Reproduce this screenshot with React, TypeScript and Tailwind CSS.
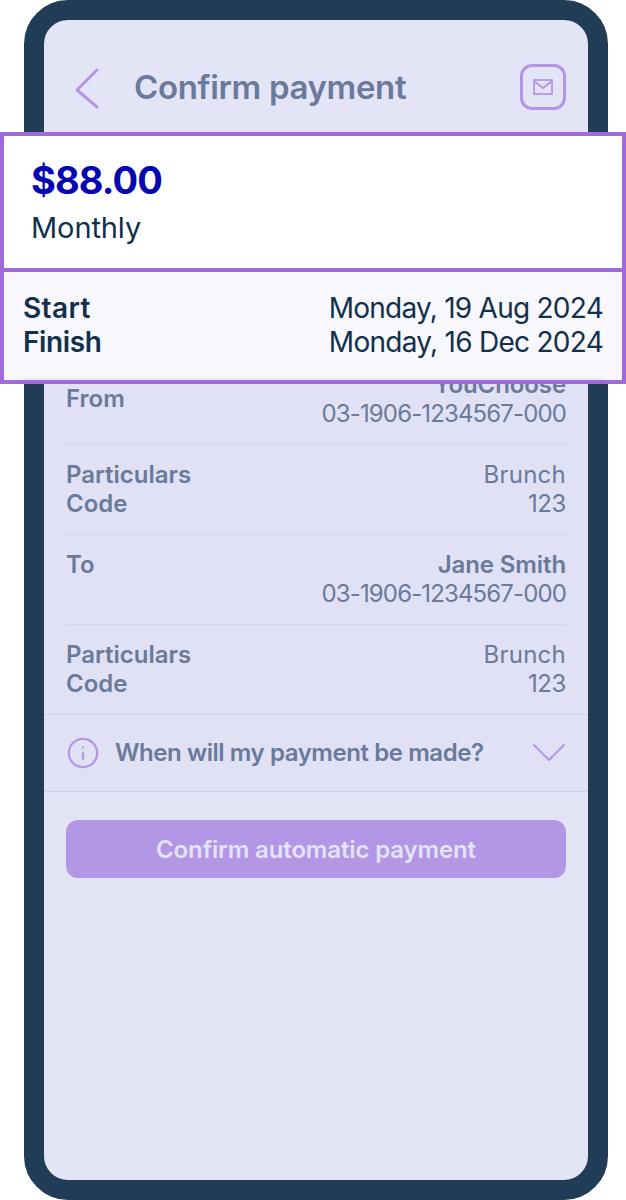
import { Info } from "lucide-react";

const font = { fontFamily: '"Inter", "Noto Sans", sans-serif' };

interface RowProps {
    label: string;
    label2?: string;
    value: string;
    value2: string;
    account?: boolean;
    from?: boolean;
}

function DetailRow({ label, label2, value, value2, account, from }: RowProps) {
    return (
        <div className="flex h-[90px] justify-between border-b border-[#d5d6ea] py-[15px] text-[24px] leading-[29px] text-[#6a7a9b]">
            <div className={from ? "mt-[14px] font-semibold" : "font-semibold"}>
                <div>{label}</div>
                {label2 && <div>{label2}</div>}
            </div>
            <div className="text-right">
                <div className={account ? "font-semibold tracking-[-0.1px]" : "tracking-[0.25px]"}>{value}</div>
                <div className={account ? "tracking-[-0.87px]" : "tracking-[-0.4px]"}>{value2}</div>
            </div>
        </div>
    );
}

export default function App() {
    return (
        <div className="relative h-[1200px] w-[626px] bg-white" style={font}>
            <div className="ml-[24px] h-[1200px] w-[584px] overflow-hidden rounded-[44px] border-[20px] border-[#213c56] bg-[#e3e4f6]">
                <div className="flex h-[135px] items-start px-[22px] pt-[44px]">
                    <svg className="ml-[8px] mt-[3px] h-[42px] w-[26px] shrink-0" viewBox="0 0 26 42" fill="none">
                        <polyline points="23,3 3,23 23,40" stroke="#b495e6" strokeWidth="3" strokeLinecap="round" strokeLinejoin="round" />
                    </svg>
                    <h1 className="ml-[34px] text-[33px] font-semibold leading-[46px] tracking-[-0.35px] text-[#6a7a9b]">Confirm payment</h1>
                    <div className="ml-auto flex h-[46px] w-[46px] shrink-0 items-center justify-center rounded-[12px] border-[3px] border-[#b495e6]">
                        <svg className="h-[16px] w-[20px]" viewBox="0 0 20 16" fill="none">
                            <rect x="1" y="1" width="18" height="14" stroke="#b495e6" strokeWidth="1.8" />
                            <polyline points="1,2 10,9 19,2" stroke="#b495e6" strokeWidth="1.8" />
                        </svg>
                    </div>
                </div>
                <div className="h-[200px]" />
                <div className="bg-[#e0e1f5] px-[22px]">
                    <DetailRow label="From" value="YouChoose" value2="03-1906-1234567-000" account from />
                    <DetailRow label="Particulars" label2="Code" value="Brunch" value2="123" />
                    <DetailRow label="To" value="Jane Smith" value2="03-1906-1234567-000" account />
                    <div className="flex h-[89px] justify-between py-[15px] text-[24px] leading-[29px] text-[#6a7a9b]">
                        <div className="font-semibold">
                            <div>Particulars</div>
                            <div>Code</div>
                        </div>
                        <div className="text-right">
                            <div className="tracking-[0.25px]">Brunch</div>
                            <div className="tracking-[-0.4px]">123</div>
                        </div>
                    </div>
                </div>
                <div className="flex h-[78px] items-center border-y border-[#d0d1e8] bg-[#e0e1f5] px-[22px]">
                    <Info className="h-[34px] w-[34px] shrink-0 text-[#b495e6]" strokeWidth={1.6} />
                    <span className="ml-[15px] text-[24px] font-semibold tracking-[-0.43px] text-[#6a7a9b]">When will my payment be made?</span>
                    <svg className="ml-auto mr-[1px] h-[20px] w-[32px] shrink-0" viewBox="0 0 32 20" fill="none">
                        <polyline points="1,2 16,17 31,2" stroke="#b495e6" strokeWidth="2" strokeLinecap="round" strokeLinejoin="round" />
                    </svg>
                </div>
                <div className="px-[22px] pt-[28px]">
                    <button className="flex h-[58px] w-full items-center justify-center rounded-[12px] bg-[#b496e6] pt-[2px] text-[24px] font-semibold tracking-[-0.14px] text-[#e2e3f6]">
                        Confirm automatic payment
                    </button>
                </div>
            </div>

            <div className="absolute left-0 right-0 top-[132px] h-[252px] bg-white">
                <div className="h-[140px] border-4 border-[#a06ada] bg-white px-[28px] pt-[20px]">
                    <div className="ml-[-1px] text-[38px] font-bold leading-[48px] tracking-[-0.9px] text-[#0606b3]">$88.00</div>
                    <div className="ml-[-1px] mt-[4px] text-[29px] leading-[40px] tracking-[-0.1px] text-[#12304c]">Monthly</div>
                </div>
                <div className="mt-[-4px] h-[116px] border-4 border-[#a06ada] bg-[#f7f7fc] px-[19px] pt-[19px] text-[28px] leading-[34px] text-[#12304c]">
                    <div className="flex justify-between">
                        <span className="font-semibold tracking-[0.4px]">Start</span>
                        <span className="tracking-[-0.75px]">Monday, 19 Aug 2024</span>
                    </div>
                    <div className="flex justify-between">
                        <span className="font-semibold tracking-[-0.4px]">Finish</span>
                        <span className="tracking-[-0.73px]">Monday, 16 Dec 2024</span>
                    </div>
                    <div className="mt-[19px] h-[2px] bg-[#e9eaf5]" />
                </div>
            </div>
        </div>
    );
}
